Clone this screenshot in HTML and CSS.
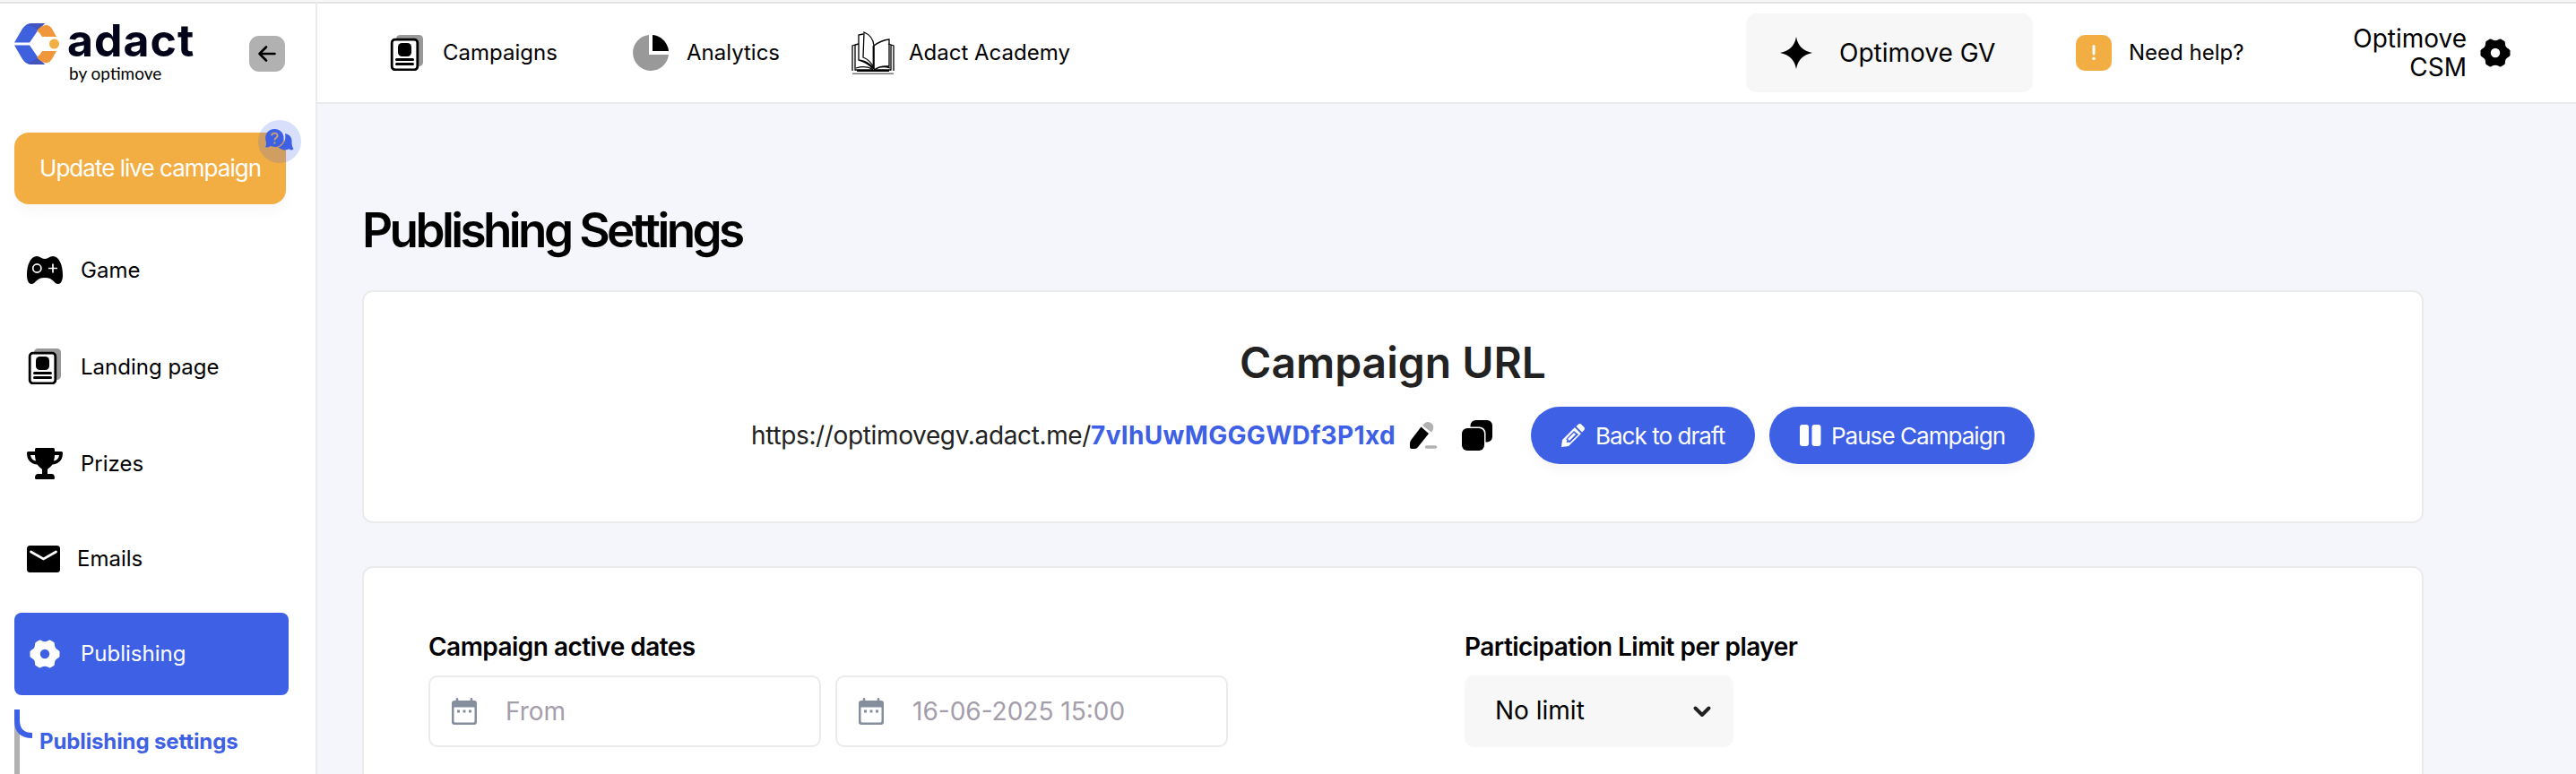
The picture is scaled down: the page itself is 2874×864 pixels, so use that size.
FILE: index.html
```html
<!DOCTYPE html>
<html lang="en">
<head>
<meta charset="utf-8">
<title>Publishing Settings</title>
<link rel="stylesheet" href="styles.css">
</head>
<body>
<svg class="defs" width="0" height="0" aria-hidden="true">
  <symbol id="pages" viewBox="0 0 40 40">
    <rect x="8" y="0" width="30" height="35" rx="4.500" fill="#999"/>
    <rect x="3.200" y="5.200" width="28.600" height="33.600" rx="3.500" fill="#fff" stroke="#000" stroke-width="2.800"/>
    <rect x="10" y="9" width="15" height="15" rx="4.500"/>
    <path d="M8.500 27.500h18M8.500 32.500h18" stroke="#000" stroke-width="3" stroke-linecap="round"/>
  </symbol>
  <symbol id="gear" viewBox="0 0 34 32">
    <path fill-rule="evenodd" d="M11 .5C13 .3 13.800 2.200 17 2.200S21 .3 23 .5l4.200 2.400c1.300 1.500.2 3.500 1.600 6.100 1.500 2.400 3.900 2.400 4.700 4.300v5.400c-.8 1.900-3.200 1.900-4.700 4.300-1.400 2.600-.3 4.600-1.600 6.100L23 31.500c-2 .2-2.800-1.700-6-1.700s-4 1.900-6 1.700l-4.200-2.400c-1.300-1.500-.2-3.500-1.600-6.100C3.700 20.600 1.300 20.600.5 18.700v-5.400C1.300 11.400 3.700 11.400 5.200 9c1.400-2.600.3-4.600 1.600-6.100zM17 10.800a5.200 5.200 0 1 0 0 10.400 5.200 5.200 0 0 0 0-10.400z"/>
  </symbol>
  <symbol id="calendar" viewBox="0 0 28 30">
    <path fill-rule="evenodd" d="M6 0a1.300 1.300 0 0 1 1.300 1.300V3h13.400V1.300a1.300 1.300 0 0 1 2.600 0V3H25a3 3 0 0 1 3 3v21a3 3 0 0 1-3 3H3a3 3 0 0 1-3-3V6a3 3 0 0 1 3-3h1.700V1.300A1.300 1.300 0 0 1 6 0zM2.500 10.500V26a1.500 1.500 0 0 0 1.500 1.500h20a1.500 1.500 0 0 0 1.500-1.500V10.500z"/>
    <path d="M6 13.500h3v3H6zM12.500 13.500h3v3h-3zM19 13.500h3v3h-3z"/>
  </symbol>
</svg>
<div class="app">
  <aside class="sidebar">
    <div class="brand">
      <svg class="brand-mark" viewBox="0 0 50 46" width="50" height="46">
        <path d="M0 21.500 9 6Q13 0 19 0h15L27 7 17 21.500z" fill="#3f61de"/>
        <path d="M0 24.500 9 40q4 6 10 6h15l-7-7-10-14.500z" fill="#3f61de"/>
        <path d="M19 0h15l-8 8q-5-6-12-5 2-3 5-3zM19 46h15l-8-8q-5 6-12 5 2 3 5 3z" fill="#4355bd"/>
        <path d="M25 8Q31 1 37 2q3 1 5 4l5 9H31q-2-4-6-7zM25 38q6 7 12 6 3-1 5-4l5-9H31q-2 4-6 7z" fill="#ef973a"/>
        <circle cx="44.500" cy="23" r="5.500" fill="#f3ae43"/>
      </svg>
      <div class="brand-text"><span class="brand-name">adact</span><span class="brand-by">by optimove</span></div>
      <button class="collapse"><svg width="20" height="18" viewBox="0 0 20 18"><path d="M18.500 9H2M9 1.500 1.500 9 9 16.500" fill="none" stroke="#000" stroke-width="2.600" stroke-linecap="round" stroke-linejoin="round"/></svg></button>
    </div>
    <button class="update"><span>Update live campaign</span>
      <i class="chat"><svg width="32" height="26" viewBox="0 0 32 26">
        <path d="M22 5.200c5 .5 8 4.300 7.500 9.300 0 3 .5 5.500 2 8-2 1.500-4 1-5-.2-4 2-9 1.200-12-2 6-2 9-8 7.500-15.100z" fill="#3e60e5"/>
        <path d="M10.500 0a10 10 0 1 1-4.700 18.800C4.500 20.500 2 20.800 0 20c1.200-2 1.200-4 .7-6.500A10 10 0 0 1 10.500 0z" fill="#3e60e5"/>
        <path d="M7 7.300c.4-3.600 6.800-3.600 6.600.3-.2 2.200-3.200 2.200-3.200 4.800M10.400 14.400v2.200" fill="none" stroke="#cda26f" stroke-width="1.900"/>
      </svg></i>
    </button>
    <nav class="menu">
      <a class="item game"><svg width="40" height="31" viewBox="0 0 40 31"><path d="M11 0c4 0 5 3 9 3s5-3 9-3c7 0 11 10 11 21 0 6-2 10-5 10-5 0-5-7-15-7S10 31 5 31c-3 0-5-4-5-10C0 10 4 0 11 0z"/><circle cx="11.300" cy="13.500" r="4.600" fill="none" stroke="#fff" stroke-width="1.700"/><path d="M29 8.500v10M24 13.500h10" stroke="#fff" stroke-width="1.700"/></svg><span>Game</span></a>
      <a class="item landing"><svg width="40" height="40"><use href="#pages"/></svg><span>Landing page</span></a>
      <a class="item prizes"><svg width="40" height="35" viewBox="0 0 40 35"><path fill-rule="evenodd" d="M10.500 0h19A1.500 1.500 0 0 1 31 1.500V4h7.500A1.500 1.500 0 0 1 40 5.500C40 13 36 18 28.500 18.500 26.500 21 24.500 22.500 23 24v5h4.500c2.500 0 3.500 2 3.500 4.500a1.500 1.500 0 0 1-1.500 1.500h-19A1.500 1.500 0 0 1 9 33.500C9 31 10 29 12.500 29H17v-5c-1.500-1.500-3.500-3-5.500-5.500C4 18 0 13 0 5.500A1.500 1.500 0 0 1 1.500 4H9V1.500A1.500 1.500 0 0 1 10.500 0zM4 8c.5 3.500 2.500 6 6 6.500Q9 11.500 9 8zM36 8h-5q0 3.500-1 6.500c3.500-.5 5.500-3 6-6.500z"/></svg><span>Prizes</span></a>
      <a class="item emails"><svg width="37" height="30" viewBox="0 0 37 30"><rect width="37" height="30" rx="3.500"/><path d="m4.500 7 14 8 14-8" fill="none" stroke="#fff" stroke-width="2.800" stroke-linecap="round"/></svg><span>Emails</span></a>
      <a class="item active"><svg width="34" height="32" fill="#fff"><use href="#gear"/></svg><span>Publishing</span></a>
      <div class="sub"><svg class="branch" width="20" height="72" viewBox="0 0 20 72"><path d="M3 14v58" stroke="#b1b1b1" stroke-width="6"/><path d="M3 0v12q0 17 17 17" fill="none" stroke="#3e60e5" stroke-width="6"/></svg><span>Publishing settings</span></div>
    </nav>
  </aside>
  <div class="body">
    <header class="top">
      <a class="tab t1"><svg width="40" height="40"><use href="#pages"/></svg><span>Campaigns</span></a>
      <a class="tab t2"><svg width="40" height="40" viewBox="0 0 40 40"><path d="M18 0v22h22A20 20 0 1 1 18 0z" fill="#999"/><path d="M22 0a20 20 0 0 1 18 18H22z"/></svg><span>Analytics</span></a>
      <a class="tab t3"><svg width="48" height="48" viewBox="0 0 48 48" fill="none" stroke="#000" stroke-width="1.300"><path d="M1 44V16l3-1M47 44V16l-3-1M4 15v28h19l1.500-2 1.500 2h18V15M4 15l4-1M44 15l-3-1"/><path d="M1 47.200h46" stroke="#777" stroke-width="1.600"/><path d="M14 1q10 4 11 15v25Q21 32 13 29zM13 3 8 4v28q10 1 16 9M25 16q8-6 17-7v30q-10-1-17 4M5 41q10-3 18 1M43 41q-9-3-16 1M8 32q11 4 15 9"/><path d="M24.500 16v26M6 44h36" stroke-width="1.800"/></svg><span>Adact Academy</span></a>
      <div class="org"><svg width="36" height="36" viewBox="0 0 36 36"><path d="M18 0q2.500 15 18 18-15.500 3-18 18Q15.500 21 0 18 15.500 15 18 0z"/></svg><span>Optimove GV</span></div>
      <div class="help"><i><svg width="6" height="18" viewBox="0 0 6 18"><path d="M3 1.500v8.500" stroke="#fff" stroke-width="3" stroke-linecap="round"/><circle cx="3" cy="15.500" r="1.800" fill="#fff"/></svg></i><span>Need help?</span></div>
      <div class="user"><span>Optimove CSM</span><svg width="34" height="32"><use href="#gear"/></svg></div>
    </header>
    <main class="main">
      <h1>Publishing Settings</h1>
      <section class="card url-card">
        <h2>Campaign URL</h2>
        <div class="url-row">
          <span class="url">https://optimovegv.adact.me/</span><b class="slug">7vIhUwMGGGWDf3P1xd</b>
          <svg class="edit" width="30" height="30" viewBox="0 0 30 30"><path d="M12.500 5.500 21 13 9 28q-1.500 2-3.500 2H2q-2 0-2-2v-4q0-2 1-3.500z"/><path d="M14 4q5-6.500 10-2.500 4.500 4 0 10z" fill="#b1b1b1"/><path d="M18.500 28h10" stroke="#b1b1b1" stroke-width="3.400" stroke-linecap="round"/></svg>
          <svg class="copy" width="34" height="34" viewBox="0 0 34 34"><rect x="9.500" width="24.500" height="24.500" rx="6"/><rect x="-1" y="7.500" width="27.500" height="28" rx="7" fill="#fff"/><rect y="9" width="25" height="25" rx="6"/></svg>
          <button class="pill p1"><svg width="26" height="26" viewBox="0 0 26 26"><path fill="#fff" fill-rule="evenodd" d="m15 4 7 7L8 25l-8 1 1-8zm-1 4L5 17.500l1.500.5-1 3 3-.5.5 1L19 12z"/><path fill="#fff" d="m16.500 3 2-2q2-2 4 0L25 3.500q2 2 0 4L23 9.500z"/><path d="m15 11-7 7" stroke="#fff" stroke-width="2.600"/><path d="m15.500 3.500 7 7" stroke="#3e60e5" stroke-width="1.200"/></svg><span>Back to draft</span></button>
          <button class="pill p2"><svg width="24" height="24"><rect width="10" height="24" rx="3" fill="#fff"/><rect x="13.500" width="10" height="24" rx="3" fill="#fff"/></svg><span>Pause Campaign</span></button>
        </div>
      </section>
      <section class="card form-card">
        <div class="field dates">
          <label>Campaign active dates</label>
          <div class="inputs">
            <div class="input"><svg width="28" height="30" fill="#858e9d"><use href="#calendar"/></svg><span>From</span></div>
            <div class="input"><svg width="28" height="30" fill="#858e9d"><use href="#calendar"/></svg><span>16-06-2025 15:00</span></div>
          </div>
        </div>
        <div class="field limit">
          <label>Participation Limit per player</label>
          <div class="select"><span>No limit</span><svg width="20" height="13" viewBox="0 0 20 13"><path d="m2.500 2.500 7.500 7.500 7.500-7.500" fill="none" stroke="#222" stroke-width="4" stroke-linecap="round" stroke-linejoin="round"/></svg></div>
        </div>
      </section>
    </main>
  </div>
</div>
</body>
</html>
```
FILE: styles.css
```css
* { box-sizing: border-box; }
body { margin: 0; font-family: Inter, sans-serif; color: #000; background: #f5f6fb; overflow: hidden; }
h1, h2 { margin: 0; white-space: nowrap; }
button { border: 0; padding: 0; font: inherit; color: inherit; }
svg { display: block; flex: none; overflow: visible; }
.defs { position: absolute; }
span, b { white-space: nowrap; }
.app { display: flex; height: 864px; overflow: hidden; border-top: 2px solid #f8f8f8; }
.sidebar { width: 354px; flex: none; background: #fff; border-right: 2px solid #ebebeb; border-top: 2px solid #e3e3e3; padding: 0 30px 0 16px; }
.brand { display: flex; height: 144px; padding-top: 22px; }
.brand-text { display: flex; flex-direction: column; width: 212px; padding-left: 9px; }
.brand-name { font-size: 50px; font-weight: 700; line-height: 38px; letter-spacing: 1px; color: #03031a; }
.brand-by { font: 400 19px/24px Lato, sans-serif; margin: 6px 0 0 2px; }
.collapse { width: 40px; height: 40px; margin-top: 14px; border-radius: 11px; background: #b1b1b1; display: flex; align-items: center; justify-content: center; }
.update { position: relative; display: flex; align-items: center; width: 303px; height: 80px; padding: 0 0 2px 28px; border-radius: 16px; background: #f3ae43; color: #fff; font-size: 26px; letter-spacing: -.97px; box-shadow: 0 8px 16px rgba(0,0,0,.03); }
.chat { position: absolute; right: -17px; top: -14px; width: 48px; height: 48px; border-radius: 50%; background: rgba(62,96,229,.2); padding: 10px 8px; }
.menu { display: flex; flex-direction: column; padding-top: 27px; }
.item { display: flex; align-items: center; width: 306px; height: 92px; padding-left: 14px; border-radius: 8px; font-size: 24px; }
.item svg { margin-right: 20px; }
.item + .item { margin-top: 16px; }
.item.emails { height: 90px; }
.item.emails svg { margin-right: 19px; }
.item.emails span, .item.active span { padding-bottom: 2px; }
.item.active { margin-top: 15px; background: #3e60e5; color: #fff; padding-left: 17px; }
.item.active svg { margin-right: 23px; }
.sub { display: flex; height: 72px; margin-top: 16px; color: #3e60e5; font-weight: 700; font-size: 24px; line-height: 72px; letter-spacing: -.12px; }
.sub span { margin-left: 8px; }
.body { flex: 1; min-width: 0; }
.top { display: flex; align-items: center; height: 114px; background: #fff; border-top: 2px solid #e3e3e3; border-bottom: 2px solid #ebebeb; font-size: 24px; padding-left: 80px; }
.tab { display: flex; align-items: center; gap: 20px; }
.tab span, .help span { padding-bottom: 2px; }
.t1 { width: 272px; }
.t2 { width: 244px; }
.t3 { width: 998px; gap: 16px; }
.org { display: flex; align-items: center; gap: 30px; width: 320px; height: 88px; padding-left: 38px; border-radius: 12px; background: #f7f7f7; font-size: 28px; }
.help { display: flex; align-items: center; gap: 19px; width: 260px; margin-left: 48px; }
.help i { width: 40px; height: 40px; border-radius: 10px; background: #f3ae43; display: flex; align-items: center; justify-content: center; }
.user { display: flex; align-items: center; gap: 15px; margin-left: 48px; font-size: 28px; line-height: 32px; text-align: right; }
.user span { width: 128px; white-space: normal; }
.main { padding: 109px 0 0 50px; }
h1 { font-size: 53px; font-weight: 600; line-height: 64px; height: 99px; letter-spacing: -3.6px; }
.card { width: 2300px; background: #fff; border: 2px solid #ebebeb; border-radius: 12px; }
.url-card { height: 260px; padding-top: 50px; display: flex; flex-direction: column; align-items: center; }
h2 { font-size: 48px; font-weight: 600; line-height: 58px; color: #222; }
.url-row { display: flex; align-items: center; height: 64px; margin-top: 20px; font-size: 28px; color: #222; }
.url { letter-spacing: -.36px; }
.slug { color: #3e60e5; letter-spacing: .33px; }
.edit { margin-left: 16px; }
.copy { margin-left: 28px; }
.pill { display: flex; align-items: center; gap: 12px; height: 64px; border-radius: 32px; background: #3e60e5; color: #fff; font-size: 26px; letter-spacing: -.95px; padding-left: 34px; box-shadow: 0 8px 12px rgba(0,0,0,.03); }
.p1 { width: 250px; margin-left: 43px; }
.p2 { width: 296px; margin-left: 16px; gap: 11px; }
.form-card { height: 300px; margin-top: 48px; display: flex; padding: 71px 72px 0; }
.dates { width: 1156px; }
label { display: block; font-size: 28px; font-weight: 600; line-height: 34px; height: 49px; letter-spacing: -.54px; }
.inputs { display: flex; gap: 16px; }
.input { display: flex; align-items: center; gap: 32px; width: 438px; height: 80px; border: 2px solid #ebebeb; border-radius: 10px; padding-left: 24px; font-size: 28px; color: #a49dab; }
.select { display: flex; align-items: center; justify-content: space-between; width: 300px; height: 80px; padding: 0 25px 0 34px; border-radius: 10px; background: #f7f7f7; font-size: 28px; }
.select span { padding-bottom: 3px; }
```
